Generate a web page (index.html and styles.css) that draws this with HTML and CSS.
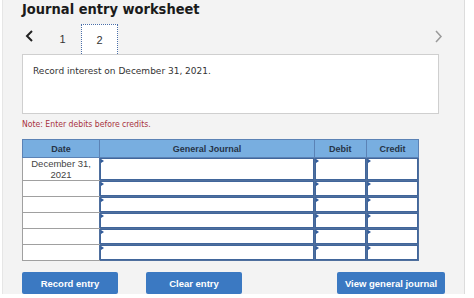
FILE: index.html
```html
<!DOCTYPE html>
<html lang="en">
<head>
    <meta charset="UTF-8">
    <title>Journal entry worksheet</title>
    <link rel="stylesheet" href="styles.css">
</head>
<body>
<div id="panel">
    <h1 class="title">Journal entry worksheet</h1>
    <div class="tabs">
        <span class="arrow prev">
            <svg width="9" height="12" viewBox="0 0 9 12"><path d="M7 1 L2 6 L7 11" fill="none" stroke="#222" stroke-width="2"/></svg>
        </span>
        <span class="tab">1</span>
        <span class="tab current">2</span>
        <span class="arrow next">
            <svg width="9" height="13" viewBox="0 0 9 13"><path d="M2 1 L7 6.5 L2 12" fill="none" stroke="#9a9a9a" stroke-width="1.5"/></svg>
        </span>
    </div>
    <div class="desc">Record interest on December 31, 2021.</div>
    <p class="note">Note: Enter debits before credits.</p>
    <table class="journal">
        <thead>
        <tr>
            <th class="c-date">Date</th>
            <th class="c-acct">General Journal</th>
            <th class="c-num">Debit</th>
            <th class="c-num">Credit</th>
        </tr>
        </thead>
        <tbody>
        <tr class="first">
            <td class="date">December 31,<br>2021</td>
            <td class="inp"><div class="box"></div></td>
            <td class="inp"><div class="box"></div></td>
            <td class="inp"><div class="box"></div></td>
        </tr>
        <tr>
            <td class="date"></td>
            <td class="inp"><div class="box"></div></td>
            <td class="inp"><div class="box"></div></td>
            <td class="inp"><div class="box"></div></td>
        </tr>
        <tr>
            <td class="date"></td>
            <td class="inp"><div class="box"></div></td>
            <td class="inp"><div class="box"></div></td>
            <td class="inp"><div class="box"></div></td>
        </tr>
        <tr>
            <td class="date"></td>
            <td class="inp"><div class="box"></div></td>
            <td class="inp"><div class="box"></div></td>
            <td class="inp"><div class="box"></div></td>
        </tr>
        <tr>
            <td class="date"></td>
            <td class="inp"><div class="box"></div></td>
            <td class="inp"><div class="box"></div></td>
            <td class="inp"><div class="box"></div></td>
        </tr>
        <tr>
            <td class="date"></td>
            <td class="inp"><div class="box"></div></td>
            <td class="inp"><div class="box"></div></td>
            <td class="inp"><div class="box"></div></td>
        </tr>
        </tbody>
    </table>
    <div class="buttons">
        <button class="btn">Record entry</button>
        <button class="btn">Clear entry</button>
        <button class="btn wide">View general journal</button>
    </div>
</div>
</body>
</html>
```

FILE: styles.css
```css
* {
    padding: 0;
    margin: 0;
    box-sizing: border-box;
}

body {
    background: #fff;
    font-family: "DejaVu Sans", Verdana, sans-serif;
    color: #333;
}

#panel {
    width: 463px;
    height: 294px;
    margin-left: 2px;
    background: #f3f3f3;
    border-left: 1px solid #e6e6e6;
    border-right: 1px solid #dcdcdc;
    padding: 0 0 0 19px;
}

.title {
    font-family: "DejaVu Sans Condensed", "DejaVu Sans", sans-serif;
    font-size: 14.5px;
    font-weight: bold;
    color: #1a1a1a;
    line-height: 18px;
}

.tabs {
    display: flex;
    align-items: center;
    height: 36px;
    width: 421px;
}

.arrow {
    display: flex;
    width: 22px;
    padding-left: 3px;
}

.arrow.next {
    margin-left: auto;
    width: auto;
    padding: 0;
}

.tab {
    width: 37px;
    height: 30px;
    margin-top: 6px;
    display: flex;
    align-items: center;
    justify-content: center;
    font-family: "Liberation Sans", Arial, sans-serif;
    font-size: 11px;
    color: #333;
}

.tab.current {
    background: #fff;
    border: 1px dotted #4a6ea8;
    border-bottom: none;
}

.desc {
    width: 417px;
    height: 60px;
    background: #fff;
    border: 1px solid #cfcfcf;
    padding: 11px 10px;
    font-size: 9px;
    color: #333;
}

.note {
    font-family: "DejaVu Sans Condensed", "DejaVu Sans", sans-serif;
    font-size: 8.6px;
    color: #a8323e;
    margin-top: 5px;
    height: 20px;
}

.journal {
    border-collapse: collapse;
    width: 397px;
    font-family: "Liberation Sans", Arial, sans-serif;
    background: #fff;
}

.journal th {
    background: #78aee0;
    border: 1px solid #5b82b5;
    height: 18px;
    font-size: 9px;
    color: #263447;
    font-weight: bold;
}

.c-date { width: 77px; }
.c-acct { width: 214px; }
.c-num { width: 52px; }

.journal td {
    height: 16px;
    padding: 0;
}

.journal tr.first td {
    height: 23px;
}

.journal td.date {
    border: 1px solid #a0a0a0;
    border-right: 1px solid #4f6f9d;
    font-size: 9.5px;
    color: #444;
    text-align: center;
    line-height: 11px;
    vertical-align: middle;
}

.journal td.inp {
    border: 1px solid #4f6f9d;
    vertical-align: top;
}

.box {
    position: relative;
    height: 100%;
    min-height: 14px;
    border: 1px solid #41669b;
}

.journal tr.first .box {
    min-height: 21px;
}

.box::before {
    content: "";
    position: absolute;
    left: 0;
    top: 0;
    border-left: 3px solid #2f5a99;
    border-top: 2px solid transparent;
    border-bottom: 2px solid transparent;
}

.buttons {
    display: flex;
    margin-top: 11px;
    width: 423px;
}

.btn {
    height: 22px;
    width: 96px;
    border: none;
    border-radius: 2px;
    background: #3b79c2;
    color: #fff;
    font-family: "Liberation Sans", Arial, sans-serif;
    font-weight: bold;
    font-size: 9.5px;
    margin-right: 28px;
}

.btn.wide {
    width: 108px;
    margin-left: auto;
    margin-right: 0;
}
```
